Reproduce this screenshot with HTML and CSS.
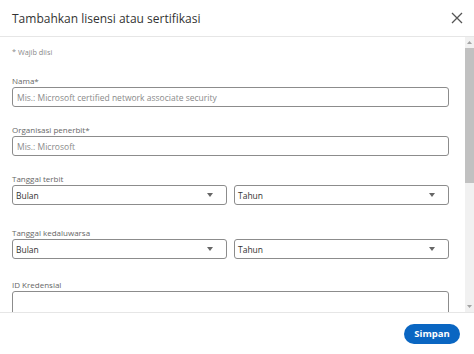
FILE: index.html
```html
<!DOCTYPE html>
<html>
<head>
  <link rel="stylesheet" href="styles.css">
</head>
<body>
    <div class="dialog">
        <div class="dialog-header">
            <h2 class="dialog-title">Tambahkan lisensi atau sertifikasi</h2>
            <button class="close-btn" aria-label="Tutup">
                <svg width="12" height="12" viewBox="0 0 12 12">
                    <path d="M1 1 L11 11 M11 1 L1 11" stroke="#555" stroke-width="1.3" fill="none"/>
                </svg>
            </button>
        </div>

        <div class="dialog-main">
            <div class="dialog-body">
                <p class="required-note">* Wajib diisi</p>

                <div class="field">
                    <label class="field-label">Nama*</label>
                    <input class="text-input" type="text" placeholder="Mis.: Microsoft certified network associate security">
                </div>

                <div class="field">
                    <label class="field-label">Organisasi penerbit*</label>
                    <input class="text-input" type="text" placeholder="Mis.: Microsoft">
                </div>

                <div class="field">
                    <label class="field-label">Tanggal terbit</label>
                    <div class="date-row">
                        <div class="select-box">
                            <span>Bulan</span>
                            <svg class="caret" width="6" height="4" viewBox="0 0 6 4"><path d="M0 0 H6 L3 4 Z" fill="#666"/></svg>
                        </div>
                        <div class="select-box">
                            <span>Tahun</span>
                            <svg class="caret" width="6" height="4" viewBox="0 0 6 4"><path d="M0 0 H6 L3 4 Z" fill="#666"/></svg>
                        </div>
                    </div>
                </div>

                <div class="field field-wide">
                    <label class="field-label">Tanggal kedaluwarsa</label>
                    <div class="date-row">
                        <div class="select-box">
                            <span>Bulan</span>
                            <svg class="caret" width="6" height="4" viewBox="0 0 6 4"><path d="M0 0 H6 L3 4 Z" fill="#666"/></svg>
                        </div>
                        <div class="select-box">
                            <span>Tahun</span>
                            <svg class="caret" width="6" height="4" viewBox="0 0 6 4"><path d="M0 0 H6 L3 4 Z" fill="#666"/></svg>
                        </div>
                    </div>
                </div>

                <div class="field field-id">
                    <label class="field-label">ID Kredensial</label>
                    <input class="text-input tall" type="text">
                </div>
            </div>

            <div class="scrollbar">
                <div class="sb-button">
                    <svg width="5" height="3" viewBox="0 0 5 3"><path d="M0 3 H5 L2.5 0 Z" fill="#a3a3a3"/></svg>
                </div>
                <div class="sb-track">
                    <div class="sb-thumb"></div>
                </div>
                <div class="sb-button">
                    <svg width="5" height="3" viewBox="0 0 5 3"><path d="M0 0 H5 L2.5 3 Z" fill="#a3a3a3"/></svg>
                </div>
            </div>
        </div>

        <div class="dialog-footer">
            <button class="save-btn">Simpan</button>
        </div>
    </div>
</body>
</html>
```

FILE: styles.css
```css
body {
  margin: 0;
  font-family: "Open Sans", "Noto Sans", sans-serif;
  background: #fff;
}

.dialog {
  width: 474px;
  height: 354px;
  display: flex;
  flex-direction: column;
}

.dialog-header {
  height: 36px;
  display: flex;
  align-items: center;
  justify-content: space-between;
  padding: 0 12px;
  border-bottom: 1px solid #e6e6e6;
  flex-shrink: 0;
}

.dialog-title {
  margin: 0;
  font-size: 12px;
  font-weight: 400;
  color: #333;
}

.close-btn {
  border: none;
  background: none;
  padding: 0;
  margin-right: -1px;
  width: 12px;
  height: 12px;
  display: flex;
}

.dialog-main {
  height: 275px;
  display: flex;
  flex-shrink: 0;
}

.dialog-body {
  flex: 1;
  overflow: hidden;
  padding: 0 16px 0 12px;
}

/* fake scrollbar, content is scrolled to top */
.scrollbar {
  width: 9px;
  display: flex;
  flex-direction: column;
  background: #f1f1f1;
}

.sb-button {
  height: 11px;
  display: flex;
  align-items: center;
  justify-content: center;
}

.sb-track {
  flex: 1;
}

.sb-thumb {
  height: 135px;
  background: #c1c1c1;
}

.required-note {
  margin: 9px 0 0;
  font-size: 7.3px;
  line-height: 12px;
  color: #888;
}

.field {
  margin-top: 16px;
}

.field-wide {
  margin-top: 21px;
}

.field-id {
  margin-top: 19px;
}

.field-label {
  display: block;
  font-size: 8px;
  line-height: 13px;
  color: #666;
}

.text-input {
  display: block;
  box-sizing: border-box;
  width: 100%;
  height: 20px;
  margin: 0;
  padding: 0 4px;
  border: 1px solid #8c8c8c;
  border-radius: 3px;
  font-family: inherit;
  font-size: 8.5px;
  color: #333;
  outline: none;
}

.text-input.tall {
  height: 30px;
}

.text-input::placeholder {
  color: #8a8a8a;
}

.date-row {
  display: flex;
  gap: 7px;
}

.select-box {
  flex: 1;
  box-sizing: border-box;
  height: 20px;
  display: flex;
  align-items: center;
  justify-content: space-between;
  padding: 0 13px 0 3px;
  border: 1px solid #8c8c8c;
  border-radius: 3px;
  font-size: 8.5px;
  color: #333;
}

.caret {
  display: block;
}

.dialog-footer {
  flex: 1;
  display: flex;
  align-items: center;
  justify-content: flex-end;
  padding: 0 14px;
  border-top: 1px solid #e6e6e6;
}

.save-btn {
  width: 56px;
  height: 20px;
  border: none;
  border-radius: 10px;
  background: #0a66c2;
  color: #fff;
  font-family: inherit;
  font-size: 9.5px;
  font-weight: 700;
  padding: 0;
}
```
